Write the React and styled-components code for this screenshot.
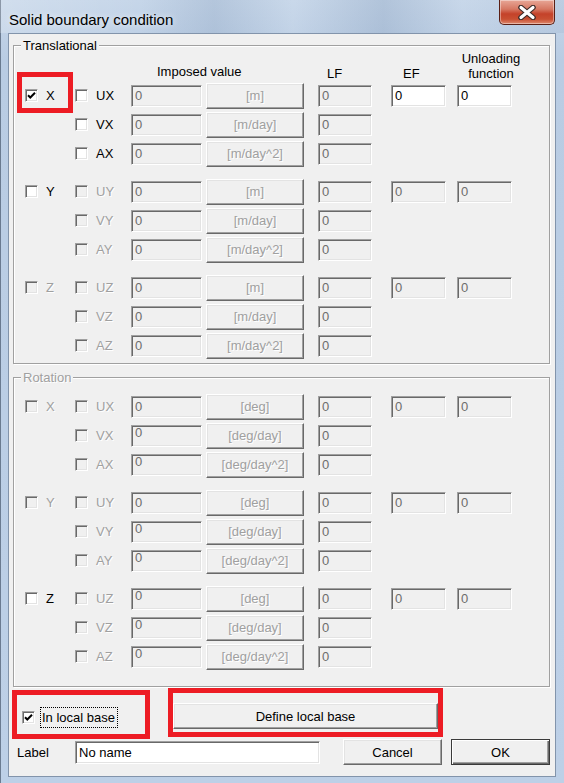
import React from 'react';
import styled, { createGlobalStyle } from 'styled-components';

const GlobalStyle = createGlobalStyle`
  html, body {
    margin: 0;
    padding: 0;
  }
  body {
    background: #bccfe5;
    font-family: "Liberation Sans", Arial, sans-serif;
    font-size: 13px;
  }
`;

const RED = '#ed1c24';
const GREY_TEXT = '#a0a0a0';

const Window = styled.div`
  width: 564px;
  height: 783px;
  box-sizing: border-box;
  display: flex;
  flex-direction: column;
  padding: 0 8px 6px 8px;
  overflow: hidden;
  background: linear-gradient(180deg, #c6d6e9 0%, #b9cce3 60px, #bdd0e7 100%);
  box-shadow: inset 1px 0 0 rgba(40, 55, 75, 0.55);
`;

const TitleBar = styled.div`
  display: flex;
  align-items: flex-start;
  justify-content: space-between;
  height: 33px;
  margin: 0 -8px;
  padding-left: 9px;
  background: linear-gradient(
    90deg,
    rgba(255, 255, 255, 0.2) 0%,
    rgba(255, 255, 255, 0) 25%,
    rgba(70, 100, 140, 0.14) 38%,
    rgba(255, 255, 255, 0.06) 52%,
    rgba(70, 100, 140, 0.16) 68%,
    rgba(255, 255, 255, 0.04) 82%,
    rgba(70, 100, 140, 0.08) 100%
  );
`;

const Title = styled.div`
  font-size: 15px;
  line-height: 17px;
  margin-top: 11px;
  color: #000;
  text-shadow: 0 0 6px rgba(255, 255, 255, 0.9);
`;

const CloseButton = styled.div`
  width: 56px;
  height: 25px;
  margin-right: 9px;
  box-sizing: border-box;
  display: flex;
  align-items: center;
  justify-content: center;
  border: 1px solid #5a1f15;
  border-top: none;
  border-radius: 0 0 5px 5px;
  background: linear-gradient(180deg, #e8a797 0%, #d67863 38%, #c4422a 58%, #c84f32 80%, #df8a6f 100%);
  box-shadow: inset 0 0 0 1px rgba(255, 255, 255, 0.4);
`;

const Client = styled.div`
  flex: 1;
  display: flex;
  flex-direction: column;
  background: #f0f0f0;
  border: 1px solid #8294ab;
  padding: 11px 5px 0 4px;
  color: #000;
`;

const GroupBox = styled.div`
  position: relative;
  border: 1px solid #a0a0a0;
  box-shadow: inset 1px 1px 0 #fff, 1px 1px 0 #fff;
  margin-top: ${(p) => p.$mt || 0}px;
  padding: ${(p) => p.$pt}px 0 ${(p) => p.$pb}px 0;
  display: flex;
  flex-direction: column;
`;

const Legend = styled.span`
  position: absolute;
  top: -8px;
  left: 7px;
  padding: 0 2px;
  line-height: 15px;
  background: #f0f0f0;
  color: ${(p) => (p.$off ? GREY_TEXT : '#000')};
  text-shadow: ${(p) => (p.$off ? '1px 1px 0 #fff' : 'none')};
`;

const Header = styled.div`
  display: grid;
  grid-template-columns: 50px 56px 75px 112px 73px 66px 55px;
  align-items: end;
  height: 36px;
  box-sizing: border-box;
  padding: 0 0 1px 11px;
`;

const HeaderCell = styled.div`
  grid-column: ${(p) => p.$col};
  padding-left: ${(p) => p.$pl || 0}px;
  padding-bottom: ${(p) => p.$pb || 0}px;
  width: ${(p) => (p.$w ? `${p.$w}px` : 'auto')};
  text-align: ${(p) => (p.$w ? 'center' : 'left')};
  line-height: 15px;
  white-space: nowrap;
`;

const Block = styled.div`
  display: flex;
  flex-direction: column;
  gap: 2px;
  & + & {
    margin-top: ${(p) => p.$gap}px;
  }
`;

const Row = styled.div`
  display: grid;
  grid-template-columns: 50px 56px 75px 112px 73px 66px 55px;
  align-items: center;
  height: 27px;
  padding-left: 11px;
`;

const CheckCell = styled.div`
  position: relative;
  grid-column: ${(p) => p.$col};
  display: flex;
  align-items: center;
  gap: 8px;
  height: 100%;
`;

const Marker = styled.div`
  position: absolute;
  left: -8px;
  top: -10px;
  width: 56px;
  height: 41px;
  box-sizing: border-box;
  border: 5px solid ${RED};
  pointer-events: none;
`;

const Box = styled.span`
  width: 13px;
  height: 13px;
  box-sizing: border-box;
  flex: none;
  display: inline-flex;
  align-items: center;
  justify-content: center;
  border: 1px solid;
  border-color: #a0a0a0 #fff #fff #a0a0a0;
  box-shadow: inset 1px 1px 0 #696969, inset -1px -1px 0 #e3e3e3;
  background: ${(p) => (p.$off ? '#f0f0f0' : '#fff')};
`;

const Caption = styled.span`
  line-height: 15px;
  white-space: nowrap;
  color: ${(p) => (p.$off ? GREY_TEXT : '#000')};
  text-shadow: ${(p) => (p.$off ? '1px 1px 0 #fff' : 'none')};
`;

const Field = styled.input`
  width: ${(p) => p.$w}px;
  height: ${(p) => p.$h || 22}px;
  box-sizing: border-box;
  margin: 0;
  padding: 0 3px ${(p) => (p.$top ? 6 : 0)}px 3px;
  font-family: inherit;
  font-size: 13px;
  outline: none;
  border: 1px solid;
  border-color: #a0a0a0 #fff #fff #a0a0a0;
  box-shadow: inset 1px 1px 0 #696969, inset -1px -1px 0 #e3e3e3;
  background: ${(p) => (p.$off ? '#f0f0f0' : '#fff')};
  color: ${(p) => (p.$off ? '#6d6d6d' : '#000')};
  -webkit-text-fill-color: ${(p) => (p.$off ? '#6d6d6d' : '#000')};
  opacity: 1;
`;

const Button = styled.button`
  width: ${(p) => p.$w}px;
  height: 26px;
  box-sizing: border-box;
  margin: 0;
  margin-left: ${(p) => p.$ml || 0}px;
  padding: 0;
  font-family: inherit;
  font-size: 13px;
  background: #f0f0f0;
  border: 1px solid;
  border-color: ${(p) => (p.$default ? '#3a3a3a' : '#fff #696969 #696969 #fff')};
  box-shadow: ${(p) =>
    p.$default
      ? 'inset 1px 1px 0 #fff, inset -1px -1px 0 #696969, inset -2px -2px 0 #a0a0a0'
      : 'inset -1px -1px 0 #a0a0a0, inset 1px 1px 0 #e3e3e3'};
  color: #000;
  &:disabled {
    color: ${GREY_TEXT};
    text-shadow: 1px 1px 0 #fff;
  }
`;

const BottomArea = styled.div`
  display: flex;
  flex-direction: column;
  margin: 0 -5px 0 -4px;
`;

const MarkedRow = styled.div`
  display: flex;
  align-items: flex-start;
  height: 52px;
`;

const RedFrame = styled.div`
  box-sizing: border-box;
  width: ${(p) => p.$w}px;
  height: 49px;
  margin-top: ${(p) => p.$mt}px;
  margin-left: ${(p) => p.$ml}px;
  border: 5px solid ${RED};
  display: flex;
  flex-direction: ${(p) => (p.$stack ? 'column' : 'row')};
  align-items: ${(p) => (p.$stack ? 'stretch' : 'center')};
  padding: ${(p) => p.$pad};
  gap: 6px;
`;

const Focused = styled.span`
  outline: 1px dotted #000;
  outline-offset: 0;
  padding: 2px 2px 2px 1px;
  line-height: 15px;
`;

const ActionRow = styled.div`
  display: flex;
  align-items: center;
  height: 26px;
  padding-left: 8px;
`;

const LabelText = styled.span`
  width: 58px;
  line-height: 15px;
`;

const CheckMark = () => (
  <svg width="9" height="9" viewBox="0 0 9 9">
    <path d="M1 4.2 L3.3 6.5 L8 1.8" fill="none" stroke="#000" strokeWidth="2" />
  </svg>
);

const CloseGlyph = () => (
  <svg width="18" height="15" viewBox="0 0 18 15">
    <path d="M3 2.5 L15 12.5 M15 2.5 L3 12.5" stroke="#3a2a28" strokeWidth="5.5" strokeLinecap="round" />
    <path d="M3 2.5 L15 12.5 M15 2.5 L3 12.5" stroke="#fff" strokeWidth="3.2" strokeLinecap="round" />
  </svg>
);

const CheckBox = ({ checked, off }) => <Box $off={off}>{checked && <CheckMark />}</Box>;

const translational = [
  { axis: 'X', axisOn: true, checked: true, marked: true, compOn: true, extraOn: true, top: [false, false, false] },
  { axis: 'Y', axisOn: true, compOn: false, top: [false, false, false] },
  { axis: 'Z', axisOn: false, compOn: false, top: [false, false, false] },
];

const rotation = [
  { axis: 'X', axisOn: false, compOn: false, top: [false, true, true] },
  { axis: 'Y', axisOn: false, compOn: false, top: [false, true, true] },
  { axis: 'Z', axisOn: true, compOn: false, top: [true, true, true] },
];

const AxisBlock = ({ block, units, gap }) => (
  <Block $gap={gap}>
    {['U', 'V', 'A'].map((c, i) => (
      <Row key={c}>
        <CheckCell $col={1}>
          {i === 0 && (
            <>
              <CheckBox checked={block.checked} off={!block.axisOn} />
              <Caption $off={!block.axisOn}>{block.axis}</Caption>
              {block.marked && <Marker />}
            </>
          )}
        </CheckCell>
        <CheckCell $col={2}>
          <CheckBox off={!block.compOn} />
          <Caption $off={!block.compOn}>
            {c}
            {block.axis}
          </Caption>
        </CheckCell>
        <Field $w={71} $off $top={block.top[i]} defaultValue="0" readOnly />
        <Button $w={98} disabled>
          {units[i]}
        </Button>
        <Field $w={54} $off defaultValue="0" readOnly />
        {i === 0 && <Field $w={55} $off={!block.extraOn} defaultValue="0" readOnly />}
        {i === 0 && <Field $w={55} $off={!block.extraOn} defaultValue="0" readOnly />}
      </Row>
    ))}
  </Block>
);

export default function App() {
  return (
    <Window>
      <GlobalStyle />
      <TitleBar>
        <Title>Solid boundary condition</Title>
        <CloseButton>
          <CloseGlyph />
        </CloseButton>
      </TitleBar>
      <Client>
        <GroupBox $pt={0} $pb={4}>
          <Legend>Translational</Legend>
          <Header>
            <HeaderCell $col="3 / 5" $pl={26} $pb={2}>
              Imposed value
            </HeaderCell>
            <HeaderCell $col={5} $pl={9}>
              LF
            </HeaderCell>
            <HeaderCell $col={6} $pl={12}>
              EF
            </HeaderCell>
            <HeaderCell $col={7} $w={68}>
              Unloading
              <br />
              function
            </HeaderCell>
          </Header>
          {translational.map((b) => (
            <AxisBlock key={b.axis} block={b} gap={13} units={['[m]', '[m/day]', '[m/day^2]']} />
          ))}
        </GroupBox>

        <GroupBox $mt={13} $pt={15} $pb={16}>
          <Legend $off>Rotation</Legend>
          {rotation.map((b) => (
            <AxisBlock key={b.axis} block={b} gap={11} units={['[deg]', '[deg/day]', '[deg/day^2]']} />
          ))}
        </GroupBox>

        <BottomArea>
          <MarkedRow>
            <RedFrame $w={138} $mt={3} $ml={3} $pad="5px 0 0 5px">
              <CheckBox checked />
              <Focused>In local base</Focused>
            </RedFrame>
            <RedFrame $w={275} $mt={1} $ml={18} $pad="10px 0 0 0" $stack>
              <Button $w={265}>Define local base</Button>
            </RedFrame>
          </MarkedRow>
          <ActionRow>
            <LabelText>Label</LabelText>
            <Field $w={245} $h={23} defaultValue="No name" readOnly />
            <Button $w={99} $ml={23}>
              Cancel
            </Button>
            <Button $w={99} $ml={9} $default>
              OK
            </Button>
          </ActionRow>
        </BottomArea>
      </Client>
    </Window>
  );
}
